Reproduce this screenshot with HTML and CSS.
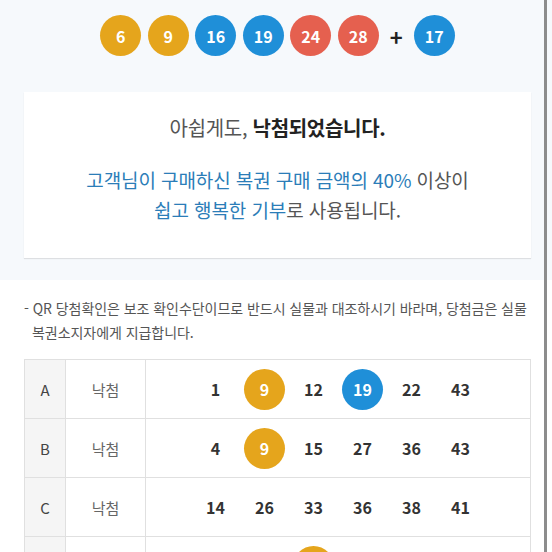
FILE: index.html
```html
<!DOCTYPE html>
<html lang="ko">
<head>
<meta charset="utf-8">
<link rel="stylesheet" href="styles.css">
</head>
<body>
<div class="page">
  <section class="top">
    <div class="balls">
      <span class="ball y">6</span>
      <span class="ball y">9</span>
      <span class="ball b">16</span>
      <span class="ball b">19</span>
      <span class="ball r">24</span>
      <span class="ball r">28</span>
      <span class="plus">+</span>
      <span class="ball b">17</span>
    </div>
    <div class="card">
      <p class="title">아쉽게도, <strong>낙첨되었습니다.</strong></p>
      <p class="msg"><span class="hl">고객님이 구매하신 복권 구매 금액의 40%</span> 이상이<br><span class="hl">쉽고 행복한 기부</span>로 사용됩니다.</p>
    </div>
  </section>
  <section class="bottom">
    <p class="notice">- QR 당첨확인은 보조 확인수단이므로 반드시 실물과 대조하시기 바라며, 당첨금은 실물<br>복권소지자에게 지급합니다.</p>
    <table class="games">
      <tr>
        <td class="lbl">A</td>
        <td class="res">낙첨</td>
        <td class="nums"><div class="row"><span class="n">1</span><span class="n ball y">9</span><span class="n">12</span><span class="n ball b">19</span><span class="n">22</span><span class="n">43</span></div></td>
      </tr>
      <tr>
        <td class="lbl">B</td>
        <td class="res">낙첨</td>
        <td class="nums"><div class="row"><span class="n">4</span><span class="n ball y">9</span><span class="n">15</span><span class="n">27</span><span class="n">36</span><span class="n">43</span></div></td>
      </tr>
      <tr>
        <td class="lbl">C</td>
        <td class="res">낙첨</td>
        <td class="nums"><div class="row"><span class="n">14</span><span class="n">26</span><span class="n">33</span><span class="n">36</span><span class="n">38</span><span class="n">41</span></div></td>
      </tr>
      <tr>
        <td class="lbl">D</td>
        <td class="res">낙첨</td>
        <td class="nums"><div class="row"><span class="n">2</span><span class="n">5</span><span class="n ball y">6</span><span class="n">30</span><span class="n">34</span><span class="n">44</span></div></td>
      </tr>
    </table>
  </section>
</div>
<div class="scrollbar"></div>
</body>
</html>
```

FILE: styles.css
```css
* { box-sizing: border-box; }
html, body { margin: 0; padding: 0; }
body {
  width: 552px;
  background: #ffffff;
  font-family: "Noto Sans CJK KR", "Noto Sans", sans-serif;
  color: #444;
  overflow: hidden;
}
.page { width: 552px; }
.top {
  background: #f6f9fc;
  padding: 15px 21px 22px 24px;
}
.balls {
  display: flex;
  justify-content: center;
  align-items: center;
  gap: 6.5px;
  height: 41px;
}
.ball {
  width: 41px;
  height: 41px;
  border-radius: 50%;
  display: flex;
  align-items: center;
  justify-content: center;
  color: #fff;
  font-weight: 700;
  font-size: 16px;
  flex: none;
}
.ball.y { background: #e5a51c; }
.ball.b { background: #1f8fd8; }
.ball.r { background: #e5604f; }
.plus {
  width: 22px;
  text-align: center;
  font-size: 22px;
  font-weight: 700;
  color: #222;
  line-height: 1;
}
.card {
  margin-top: 36px;
  background: #fff;
  padding: 23px 20px 33px;
  text-align: center;
  box-shadow: 0 1px 1px rgba(0, 0, 0, 0.1);
}
.title {
  margin: 0;
  font-size: 20px;
  line-height: 26px;
  color: #555;
  letter-spacing: -0.3px;
}
.title strong { color: #222; font-weight: 700; }
.msg {
  margin: 24px 0 0;
  font-size: 19px;
  line-height: 30px;
  color: #555;
  letter-spacing: -0.1px;
}
.hl { color: #2b7db8; }
.bottom {
  padding: 16px 21px 0 24px;
}
.notice {
  margin: 0;
  font-size: 14px;
  line-height: 24px;
  color: #555;
  letter-spacing: -0.05px;
  white-space: nowrap;
  padding-left: 8px;
  text-indent: -8px;
}
.games {
  margin-top: 15px;
  width: 507px;
  border-collapse: collapse;
  table-layout: fixed;
}
.games td {
  border: 1px solid #e0e0e0;
  height: 59px;
  padding: 0;
  text-align: center;
  font-size: 15px;
}
.lbl { width: 41px; background: #f5f5f5; color: #444; }
.res { width: 80px; color: #666; }
.row {
  display: flex;
  justify-content: center;
  align-items: center;
}
.n {
  width: 49px;
  height: 41px;
  display: flex;
  align-items: center;
  justify-content: center;
  font-weight: 700;
  color: #333;
  font-size: 16px;
}
.n.ball {
  width: 41px;
  margin: 0 4px;
  color: #fff;
}
.scrollbar {
  position: fixed;
  top: 0;
  left: 544px;
  width: 3px;
  height: 552px;
  background: #8c8c8c;
}
```
